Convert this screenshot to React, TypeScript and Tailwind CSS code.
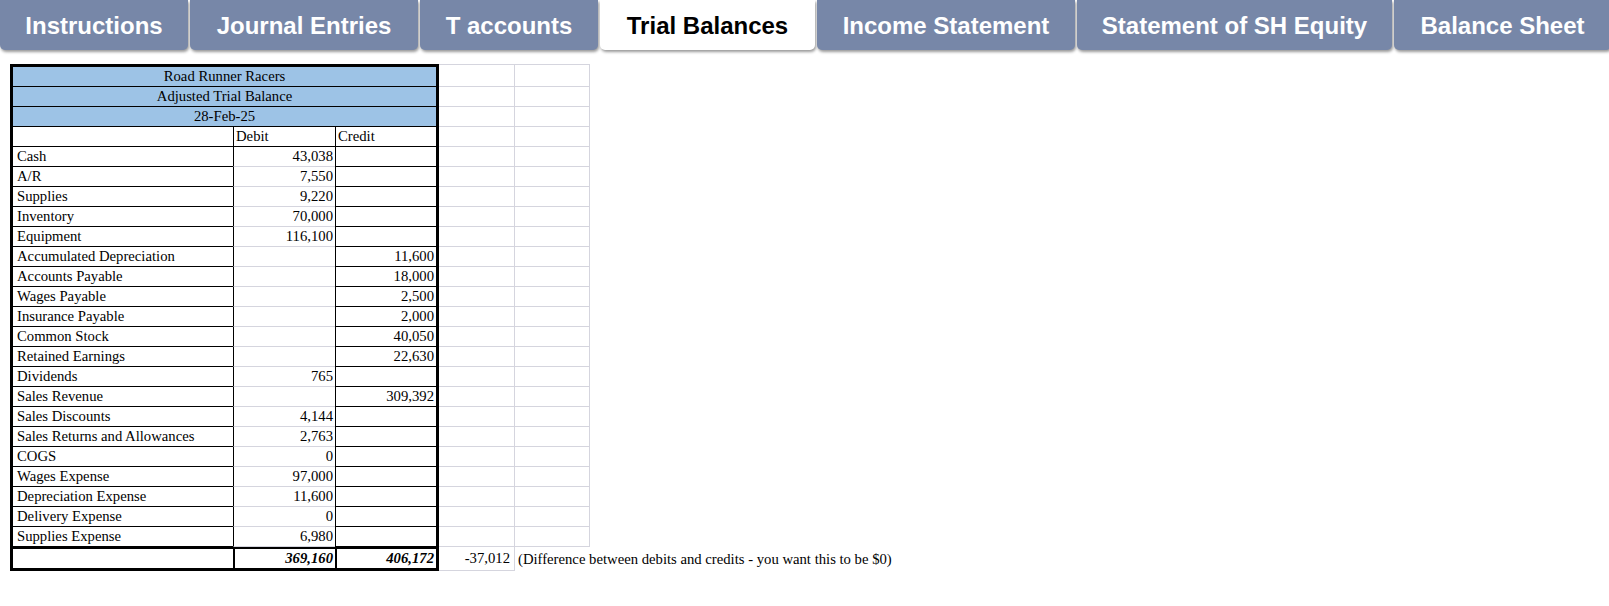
import React from "react";

const tabs = [
  { name: "Instructions", w: "w-[188px]" },
  { name: "Journal Entries", w: "w-[228px]" },
  { name: "T accounts", w: "w-[178px]" },
  { name: "Trial Balances", w: "w-[215px]", active: true },
  { name: "Income Statement", w: "w-[258px]" },
  { name: "Statement of SH Equity", w: "w-[315px]" },
  { name: "Balance Sheet", w: "w-[217px]" },
];

const rows: [string, string, string][] = [
  ["Cash", "43,038", ""],
  ["A/R", "7,550", ""],
  ["Supplies", "9,220", ""],
  ["Inventory", "70,000", ""],
  ["Equipment", "116,100", ""],
  ["Accumulated Depreciation", "", "11,600"],
  ["Accounts Payable", "", "18,000"],
  ["Wages Payable", "", "2,500"],
  ["Insurance Payable", "", "2,000"],
  ["Common Stock", "", "40,050"],
  ["Retained Earnings", "", "22,630"],
  ["Dividends", "765", ""],
  ["Sales Revenue", "", "309,392"],
  ["Sales Discounts", "4,144", ""],
  ["Sales Returns and Allowances", "2,763", ""],
  ["COGS", "0", ""],
  ["Wages Expense", "97,000", ""],
  ["Depreciation Expense", "11,600", ""],
  ["Delivery Expense", "0", ""],
  ["Supplies Expense", "6,980", ""],
];

export default function App() {
  const serif = { fontFamily: '"Liberation Serif", "Times New Roman", serif' };
  return (
    <div className="w-[1609px] h-[606px] bg-white overflow-hidden">
      {/* Tabs */}
      <div className="flex gap-[2px] h-[50px]" style={{ fontFamily: '"Liberation Sans", Arial, sans-serif' }}>
        {tabs.map((t) => (
          <div
            key={t.name}
            className={`${t.w} shrink-0 h-[50px] pt-[2px] flex items-center justify-center rounded-b-[5px] shadow-[1px_2px_3px_rgba(0,0,0,0.4)] text-[24px] font-bold whitespace-nowrap ${
              t.active ? "bg-white text-black" : "bg-[#7787a8] text-white"
            }`}
          >
            {t.name}
          </div>
        ))}
      </div>

      {/* Sheet */}
      <div className="flex mt-[14px] ml-[10px] text-[14.7px] leading-none text-black" style={serif}>
        {/* Table */}
        <div className="w-[429px] border-[3px] border-black shrink-0">
          {["Road Runner Racers", "Adjusted Trial Balance", "28-Feb-25"].map((t) => (
            <div key={t} className="h-[20px] bg-[#9dc3e6] border-b border-black flex items-center justify-center">
              {t}
            </div>
          ))}
          <div className="h-[20px] flex border-b border-black">
            <div className="w-[220px]" />
            <div className="w-[102px] border-l border-black flex items-center pl-[2px]">Debit</div>
            <div className="flex-1 border-l border-black flex items-center pl-[2px]">Credit</div>
          </div>
          {rows.map(([label, d, c]) => (
            <div key={label} className="h-[20px] flex">
              <div className="w-[220px] border-b border-black flex items-center pl-[4px] whitespace-nowrap">{label}</div>
              <div className="w-[102px] border-l border-l-black border-b border-b-[#d5d5de] flex items-center justify-end pr-[2px]">
                {d}
              </div>
              <div className="flex-1 border-l border-b border-black flex items-center justify-end pr-[2px]">{c}</div>
            </div>
          ))}
          <div className="h-[21px] flex border-t-2 border-black font-bold italic">
            <div className="w-[220px]" />
            <div className="w-[102px] border-l-2 border-black flex items-center justify-end pr-[2px]">369,160</div>
            <div className="flex-1 border-l-2 border-black flex items-center justify-end pr-[2px]">406,172</div>
          </div>
        </div>

        {/* Grid */}
        <div className="w-[151px] shrink-0 border-t border-[#d5d5de]">
          <div className="h-[22px] flex border-b border-[#d5d5de]">
            <div className="w-[76px] border-r border-[#d5d5de]" />
            <div className="w-[75px] border-r border-[#d5d5de]" />
          </div>
          {Array.from({ length: 23 }).map((_, i) => (
            <div key={i} className="h-[20px] flex border-b border-[#d5d5de]">
              <div className="w-[76px] border-r border-[#d5d5de]" />
              <div className="w-[75px] border-r border-[#d5d5de]" />
            </div>
          ))}
          <div className="h-[24px] flex">
            <div className="w-[76px] shrink-0 border-r border-b border-[#d5d5de] flex items-center justify-end pr-[4px]">-37,012</div>
            <div className="w-[75px] shrink-0 flex items-center pl-[3px] whitespace-nowrap">
              (Difference between debits and credits - you want this to be $0)
            </div>
          </div>
        </div>
      </div>
    </div>
  );
}
